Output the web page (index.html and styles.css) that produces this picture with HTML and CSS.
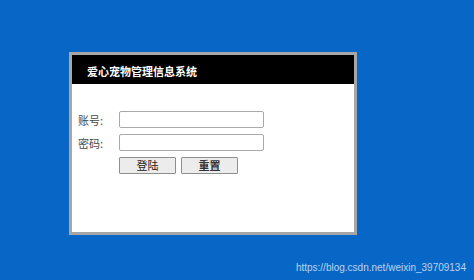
FILE: index.html
```html
<!DOCTYPE html>
<html lang="zh">
<head>
<meta charset="utf-8">
<title>爱心宠物管理信息系统</title>
<link rel="stylesheet" href="styles.css">
</head>
<body>
<div class="panel">
  <div class="header"><span class="title">爱心宠物管理信息系统</span></div>
  <form class="form">
    <label class="label">账号:</label>
    <input class="field" type="text">
    <label class="label">密码:</label>
    <input class="field" type="password">
    <div class="actions">
      <button type="button" class="btn">登陆</button>
      <button type="button" class="btn btn-bold">重置</button>
    </div>
  </form>
</div>
<div class="watermark">https://blog.csdn.net/weixin_39709134</div>
</body>
</html>
```
FILE: styles.css
```css
html, body {
  margin: 0;
  padding: 0;
}
body {
  width: 474px;
  height: 280px;
  background: #0866c6;
  position: relative;
  overflow: hidden;
  font-family: "Liberation Sans", "Noto Sans CJK SC", sans-serif;
}
.panel {
  margin: 52px 0 0 69px;
  width: 288px;
  height: 183px;
  box-sizing: border-box;
  border: 3px solid #a6a6a6;
  background: #fff;
}
.header {
  height: 29px;
  background: #000;
  display: flex;
  align-items: center;
  padding-left: 15px;
  padding-top: 2px;
  box-sizing: border-box;
}
.title {
  color: #fff;
  font-size: 11px;
  font-weight: bold;
  font-family: "Noto Sans CJK SC", sans-serif;
}
.form {
  margin: 0;
  padding: 27px 0 0 6px;
  display: grid;
  grid-template-columns: 41px 145px;
  row-gap: 6px;
  align-items: center;
}
.label {
  font-size: 11px;
  color: #4a4a4a;
  font-family: "Noto Sans CJK SC", sans-serif;
}
.field {
  width: 145px;
  height: 17px;
  box-sizing: border-box;
  border: 1px solid #a9a9a9;
  border-radius: 2px;
  padding: 0 2px;
  margin: 0;
  background: #fff;
}
.actions {
  grid-column: 2;
  display: flex;
  gap: 5px;
}
.btn {
  width: 57px;
  height: 17px;
  box-sizing: border-box;
  border: 1px solid #8f8f8f;
  border-radius: 1px;
  background: #ececec;
  margin: 0;
  padding: 0;
  font-size: 11px;
  line-height: 15px;
  color: #222;
  font-family: "Noto Sans CJK SC", sans-serif;
}
.btn-bold {
  font-weight: bold;
  color: #333;
}
.watermark {
  position: absolute;
  right: 8px;
  top: 262px;
  font-size: 10px;
  color: rgba(255, 255, 255, 0.72);
  font-family: "Liberation Sans", sans-serif;
}
```
